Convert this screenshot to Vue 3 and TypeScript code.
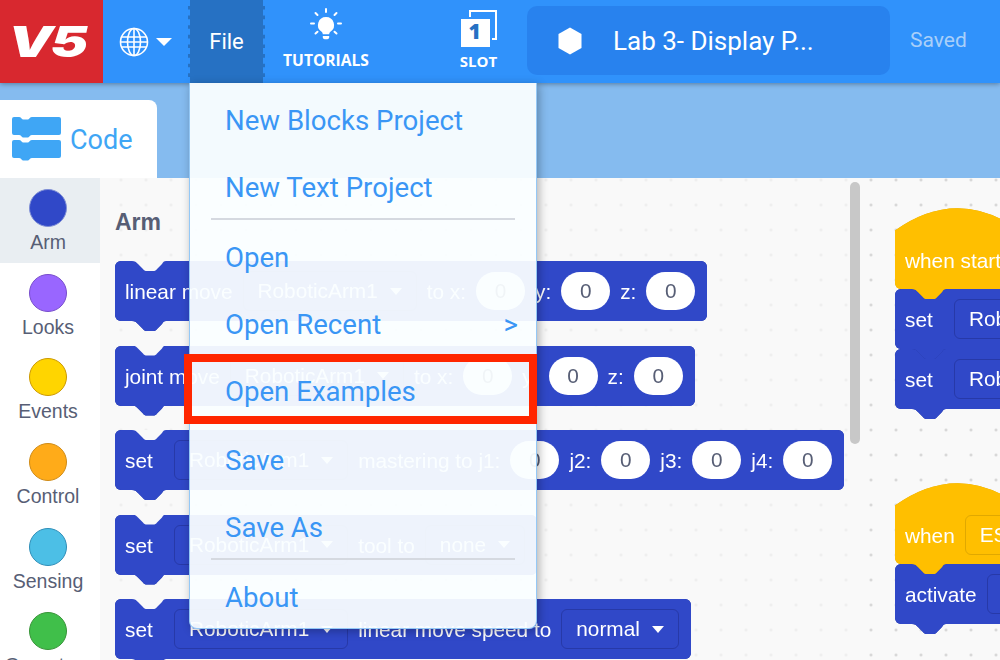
<script setup lang="ts">
type Part = { kind: 'text' | 'drop' | 'pill'; value: string }
type Block = { hat?: boolean; parts: Part[] }

const t = (value: string): Part => ({ kind: 'text', value })
const d = (value: string): Part => ({ kind: 'drop', value })
const p = (value = '0'): Part => ({ kind: 'pill', value })

const categories = [
  { name: 'Arm', color: '#3048c8', edge: '#7f8fd6', active: true },
  { name: 'Looks', color: '#9966ff', edge: '#774dcb' },
  { name: 'Events', color: '#ffd500', edge: '#cc9900' },
  { name: 'Control', color: '#ffab19', edge: '#cf8b17' },
  { name: 'Sensing', color: '#4cbfe6', edge: '#2e8eb8' },
  { name: 'Operators', color: '#40bf4a', edge: '#389438' },
]

const paletteBlocks: Block[] = [
  { parts: [t('linear move'), d('RoboticArm1'), t('to x:'), p(), t('y:'), p(), t('z:'), p()] },
  { parts: [t('joint move'), d('RoboticArm1'), t('to x:'), p(), t('y:'), p(), t('z:'), p()] },
  { parts: [t('set'), d('RoboticArm1'), t('mastering to j1:'), p(), t('j2:'), p(), t('j3:'), p(), t('j4:'), p()] },
  { parts: [t('set'), d('RoboticArm1'), t('tool to'), d('none')] },
  { parts: [t('set'), d('RoboticArm1'), t('linear move speed to'), d('normal')] },
]

const stacks: Block[][] = [
  [
    { hat: true, parts: [t('when started')] },
    { parts: [t('set'), d('RoboticArm1')] },
    { parts: [t('set'), d('RoboticArm1')] },
  ],
  [
    { hat: true, parts: [t('when'), d('ESC')] },
    { parts: [t('activate'), d('RoboticArm1')] },
  ],
]

const menuRows = [
  { label: 'New Blocks Project' },
  { label: 'New Text Project' },
  { divider: true },
  { label: 'Open' },
  { label: 'Open Recent', more: true },
  { label: 'Open Examples', marked: true },
  { spacer: true },
  { label: 'Save' },
  { label: 'Save As' },
  { divider: true },
  { label: 'About' },
]
</script>

<template>
  <div class="app">
    <header class="topbar">
      <div class="logo"><span>V5</span></div>

      <div class="lang">
        <svg width="30" height="30" viewBox="0 0 30 30" fill="none" stroke="#fff" stroke-width="1.6">
          <circle cx="15" cy="15" r="13.5" />
          <ellipse cx="15" cy="15" rx="6.5" ry="13.5" />
          <path d="M15 1.5v27M2.6 10h24.8M2.6 20h24.8M1.5 15h27" />
        </svg>
        <span class="caret big"></span>
      </div>

      <div class="file-tab">
        File
        <div class="menu">
          <template v-for="(row, i) in menuRows" :key="i">
            <div v-if="row.divider" class="menu-line"></div>
            <div v-else-if="row.spacer" class="menu-spacer"></div>
            <div v-else class="menu-item">
              <span>{{ row.label }}</span>
              <span v-if="row.more" class="more">&gt;</span>
              <div v-if="row.marked" class="marker"></div>
            </div>
          </template>
        </div>
      </div>

      <div class="tutorials">
        <svg width="34" height="36" viewBox="2 0 34 36" fill="none">
          <path d="M19 9a8 8 0 0 0-4.700 14.500c1 .8 1.400 1.600 1.500 2.700h6.400c.1-1.100.5-1.900 1.500-2.700A8 8 0 0 0 19 9z" fill="#fff" />
          <path d="M15.800 28h6.400v1.400c0 1-1 1.800-3.200 1.800s-3.200-.8-3.200-1.800z" fill="#fff" />
          <path d="M19 1v3M8.500 5l2 2M29.500 5l-2 2M4 15.500h3M31 15.500h3M8.500 25.500l2-1.800M29.500 25.500l-2-1.800" stroke="#fff" stroke-width="2" stroke-linecap="round" />
        </svg>
        <span>TUTORIALS</span>
      </div>

      <div class="slot">
        <div class="slot-icon">
          <div class="slot-back"></div>
          <div class="slot-front">1</div>
        </div>
        <span>SLOT</span>
      </div>

      <div class="project">
        <svg width="26" height="30" viewBox="0 0 26 30"><path d="M13 1.500l11.500 6.500v14L13 28.500 1.500 22V8z" fill="#fff" /></svg>
        <span>Lab 3- Display P...</span>
      </div>

      <div class="saved">Saved</div>
    </header>

    <div class="tabstrip">
      <div class="code-tab">
        <svg width="49" height="44" viewBox="0 0 49 44" fill="#3fa6f5">
          <path d="M0 2a2 2 0 0 1 2-2h5c2 0 2.500 2 4 2.500h5C17.500 2 18 0 20 0h27a2 2 0 0 1 2 2v14a2 2 0 0 1-2 2H20c-2 0-2.500 2-4 2.500h-5C9.500 20 9 18 7 18H2a2 2 0 0 1-2-2z" />
          <path d="M0 25a2 2 0 0 1 2-2h5c2 0 2.500 2 4 2.500h5c1.500-.5 2-2.500 4-2.500h27a2 2 0 0 1 2 2v14a2 2 0 0 1-2 2H20c-2 0-2.500 2-4 2.500h-5C9.500 43 9 41 7 41H2a2 2 0 0 1-2-2z" />
        </svg>
        <span class="code-name">Code</span>
      </div>
    </div>

    <div class="workspace">
      <nav class="sidebar">
        <div v-for="c in categories" :key="c.name" :class="['cat', { active: c.active }]">
          <div class="dot" :style="{ background: c.color, borderColor: c.edge }"></div>
          <div class="cat-name">{{ c.name }}</div>
        </div>
      </nav>

      <section class="palette">
        <div class="palette-title">Arm</div>
        <div class="palette-list">
          <div v-for="(b, i) in paletteBlocks" :key="i" class="block">
            <template v-for="(part, j) in b.parts" :key="j">
              <span v-if="part.kind === 'text'" class="label">{{ part.value }}</span>
              <span v-else-if="part.kind === 'drop'" class="drop">{{ part.value }}<i class="caret"></i></span>
              <span v-else class="pill">{{ part.value }}</span>
            </template>
          </div>
        </div>
      </section>

      <div class="scrollbar"></div>

      <section class="canvas">
        <div v-for="(stack, i) in stacks" :key="i" class="stack">
          <div
            v-for="(b, j) in stack"
            :key="j"
            :class="['block', { hat: b.hat }]"
            :style="{ zIndex: stack.length - j }"
          >
            <template v-for="(part, k) in b.parts" :key="k">
              <span v-if="part.kind === 'text'" class="label">{{ part.value }}</span>
              <span v-else class="drop">{{ part.value }}<i class="caret"></i></span>
            </template>
          </div>
        </div>
      </section>
    </div>
  </div>
</template>

<style>
html,
body {
  margin: 0;
}
</style>

<style scoped>
.app {
  width: 1000px;
  height: 660px;
  overflow: hidden;
  display: flex;
  flex-direction: column;
  background: #f9f9f9;
  font-family: 'Liberation Sans', Arial, sans-serif;
}

.topbar {
  flex: 0 0 83px;
  display: flex;
  align-items: stretch;
  background: #3092fb;
  color: #fff;
  position: relative;
  z-index: 5;
  box-shadow: 0 1px 5px rgba(0, 0, 0, 0.35);
}

.logo {
  width: 103px;
  background: #d8282f;
  display: flex;
  align-items: center;
  justify-content: center;
}

.logo span {
  font-family: Inter, sans-serif;
  font-weight: 900;
  font-style: italic;
  font-size: 42px;
  letter-spacing: -2px;
  line-height: 1;
  transform: translateX(-5px) scaleX(1.35);
}

.lang {
  width: 85px;
  display: flex;
  align-items: center;
  gap: 7px;
  padding-left: 16px;
  box-sizing: border-box;
}

.caret {
  display: inline-block;
  width: 0;
  height: 0;
  border-left: 6px solid transparent;
  border-right: 6px solid transparent;
  border-top: 7px solid #fff;
  margin-left: 12px;
}

.caret.big {
  margin-left: 0;
  border-left-width: 8px;
  border-right-width: 8px;
  border-top-width: 8px;
}

.file-tab {
  width: 77px;
  box-sizing: border-box;
  position: relative;
  display: flex;
  align-items: center;
  justify-content: center;
  background: #2671c3;
  border-left: 2px dashed #3092fb;
  border-right: 2px dashed #3092fb;
  background-clip: border-box;
  font-family: Roboto, sans-serif;
  font-size: 22px;
}

.menu {
  position: absolute;
  top: 100%;
  left: -1px;
  width: 348px;
  height: 546px;
  box-sizing: border-box;
  padding-top: 4px;
  background: rgba(250, 254, 255, 0.94);
  border: 1px solid #94c8f6;
  border-top: 0;
  border-radius: 0 0 8px 8px;
  box-shadow: 2px 2px 10px rgba(0, 0, 0, 0.3);
  font-family: Roboto, sans-serif;
  font-size: 27.6px;
  color: #3a96f5;
}

.menu-item {
  position: relative;
  height: 67px;
  display: flex;
  align-items: center;
  justify-content: space-between;
  padding: 0 18px 0 35px;
}

.menu-line {
  height: 2px;
  margin: -3px 21px 4px;
  background: #d5d9e0;
}

.menu-spacer {
  height: 2px;
}

.marker {
  position: absolute;
  left: -6px;
  right: -1px;
  top: -4px;
  bottom: 1px;
  border: 8px solid #ff2600;
}

.tutorials {
  width: 120px;
  margin-left: 1px;
  display: flex;
  flex-direction: column;
  align-items: center;
  padding-top: 8px;
  box-sizing: border-box;
  font-family: 'Open Sans', sans-serif;
  font-weight: 700;
  font-size: 15.6px;
  gap: 5px;
}

.slot {
  width: 67px;
  margin-left: 59px;
  margin-right: 3px;
  display: flex;
  flex-direction: column;
  align-items: center;
  padding-top: 10px;
  box-sizing: border-box;
  font-family: 'Open Sans', sans-serif;
  font-weight: 700;
  font-size: 15px;
  gap: 4px;
}

.slot-icon {
  position: relative;
  width: 36px;
  height: 37px;
}

.slot-back {
  position: absolute;
  right: 0;
  top: 0;
  width: 28px;
  height: 30px;
  box-sizing: border-box;
  border: 2px solid #fff;
}

.slot-front {
  position: absolute;
  left: 0;
  bottom: 0;
  width: 31px;
  height: 30px;
  background: #fff;
  border-top: 2px solid #3092fb;
  border-right: 2px solid #3092fb;
  color: #2671c3;
  font-size: 21px;
  font-weight: 800;
  line-height: 24px;
  padding-left: 8px;
  box-sizing: border-box;
}

.project {
  width: 363px;
  margin: 6px 0 8px 12px;
  background: #2882ee;
  border-radius: 10px;
  display: flex;
  align-items: center;
  gap: 30px;
  padding-left: 30px;
  box-sizing: border-box;
  font-family: Roboto, sans-serif;
  font-size: 26px;
}

.saved {
  margin-left: 20px;
  align-self: center;
  margin-top: -4px;
  font-family: Roboto, sans-serif;
  font-size: 21px;
  color: #a9cff9;
}

.tabstrip {
  flex: 0 0 95px;
  background: #85bbef;
  display: flex;
  align-items: flex-end;
}

.code-tab {
  width: 157px;
  height: 78px;
  background: #fff;
  border-radius: 0 8px 0 0;
  display: flex;
  align-items: center;
  gap: 9px;
  padding-left: 12px;
  box-sizing: border-box;
  font-family: Roboto, sans-serif;
  font-size: 27px;
  color: #3fa6f5;
}

.code-name {
  margin-top: 2px;
}

.workspace {
  flex: 1;
  min-height: 0;
  display: flex;
}

.sidebar {
  flex: 0 0 100px;
  background: #fff;
  color: #575e75;
}

.cat {
  height: 84.7px;
  display: flex;
  flex-direction: column;
  align-items: center;
  padding: 11px 4px 0 0;
  box-sizing: border-box;
}

.cat.active {
  background: #e9eef2;
}

.dot {
  width: 38px;
  height: 38px;
  box-sizing: border-box;
  border-radius: 50%;
  border: 1px solid;
  flex: none;
}

.cat-name {
  font-size: 19.5px;
  line-height: 22px;
  margin-top: 4px;
}

.palette {
  flex: 0 0 750px;
  box-sizing: border-box;
  padding: 32px 0 0 15px;
  background: #f9f9f9 radial-gradient(circle, #ececec 1px, transparent 1.5px) 8.5px 14.5px / 25px 25px;
  overflow: hidden;
}

.palette-title {
  font-size: 23px;
  font-weight: 700;
  color: #575e75;
  line-height: 24px;
  margin-bottom: 27px;
}

.palette-list {
  display: flex;
  flex-direction: column;
  align-items: flex-start;
  gap: 24.500px;
}

.block {
  position: relative;
  height: 60px;
  width: fit-content;
  display: flex;
  align-items: center;
  gap: 10px;
  padding: 2px 12px 0 10px;
  box-sizing: border-box;
  background: #3048c8;
  border-radius: 6px;
  color: #fff;
  font-size: 20.8px;
  white-space: nowrap;
  filter: drop-shadow(0 0 0.6px #26389f);
}

.block::before {
  content: '';
  position: absolute;
  top: 0;
  left: 17px;
  width: 34px;
  height: 10px;
  background: #f9f9f9;
  clip-path: path('M0 0C3 0 4 1 6 3L11 8C12 9.500 13 10 15 10H21C23 10 24 9.500 25 8L30 3C31 1 32 0 34 0Z');
}

.block::after {
  content: '';
  position: absolute;
  top: 100%;
  left: 17px;
  width: 34px;
  height: 10px;
  background: #3048c8;
  clip-path: path('M0 0C3 0 4 1 6 3L11 8C12 9.500 13 10 15 10H21C23 10 24 9.500 25 8L30 3C31 1 32 0 34 0Z');
}

.label:first-child {
  min-width: 39px;
}

.drop {
  height: 40px;
  margin-top: -2px;
  display: flex;
  align-items: center;
  padding: 0 14px;
  border: 1px solid #2739a8;
  border-radius: 6px;
  box-sizing: border-box;
}

.pill {
  width: 49px;
  height: 38px;
  margin-top: -2px;
  border-radius: 19px;
  background: #fff;
  color: #575e75;
  display: flex;
  align-items: center;
  justify-content: center;
}

.scrollbar {
  flex: 0 0 10px;
  height: 262px;
  margin-top: 4px;
  background: #c8c8c8;
  border-radius: 5px;
}

.canvas {
  flex: 1;
  min-width: 0;
  box-sizing: border-box;
  padding: 52px 0 0 35px;
  display: flex;
  flex-direction: column;
  gap: 96px;
  background: radial-gradient(circle, #cfcfcf 1px, transparent 1.5px) -1.500px 14.500px / 25px 25px;
}

.stack {
  display: flex;
  flex-direction: column;
  align-items: flex-start;
}

.stack .block + .block::before {
  display: none;
}

.block.hat {
  height: 59px;
  min-width: 125px;
  background: #ffbf00;
  border-radius: 0 0 6px 6px;
  filter: drop-shadow(0 0 0.6px #d9a200);
}

/* the hat's curved top */
.block.hat::before {
  top: -22px;
  left: 0;
  width: 125px;
  height: 22.500px;
  background: #ffbf00;
  clip-path: path('M0 22.500Q62.500 -22 125 22.500Z');
}

.block.hat::after {
  background: #ffbf00;
}

.hat .drop {
  border-color: #e0a800;
}
</style>
